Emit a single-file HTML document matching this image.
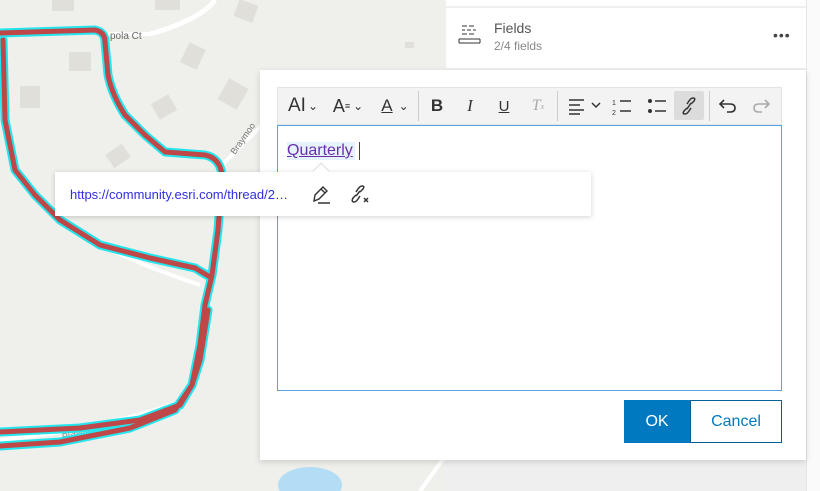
<!DOCTYPE html>
<html><head><meta charset="utf-8"><style>
*{box-sizing:border-box;margin:0;padding:0}
body{width:820px;height:491px;overflow:hidden;position:relative;font-family:"Liberation Sans",sans-serif;background:#f1f1ef}
.abs{position:absolute}
.tb{position:absolute;top:0;height:38px;display:flex;align-items:center;justify-content:center;color:#333}
</style></head><body>
<svg class="abs" style="left:0;top:0" width="446" height="491" viewBox="0 0 446 491">
<rect width="446" height="491" fill="#efefeb"/>
<g fill="#e0dfda">
<rect x="52" y="0" width="22" height="11"/><rect x="155" y="0" width="25" height="10"/><rect x="236" y="2" width="20" height="18" transform="rotate(20 246 11)"/>
<rect x="69" y="52" width="22" height="19"/><rect x="20" y="86" width="20" height="22"/><rect x="184" y="45" width="18" height="22" transform="rotate(25 193 56)"/>
<rect x="154" y="98" width="20" height="18" transform="rotate(-30 164 107)"/><rect x="222" y="82" width="22" height="24" transform="rotate(30 233 94)"/>
<rect x="108" y="148" width="20" height="16" transform="rotate(-35 118 156)"/><rect x="405" y="42" width="9" height="6"/>
</g>
<path d="M150 34 Q200 20 215 0" stroke="#fff" stroke-width="5" fill="none"/>
<path d="M108 34 L150 34" stroke="#fff" stroke-width="4" fill="none"/>
<path d="M222 165 L262 125" stroke="#fff" stroke-width="4" fill="none"/>
<path d="M60 222 Q110 255 200 285" stroke="#fff" stroke-width="4" fill="none"/>
<path d="M0 440 Q100 430 185 400" stroke="#fff" stroke-width="4" fill="none"/>
<path d="M420 491 L446 455" stroke="#fff" stroke-width="4" fill="none"/>
<ellipse cx="310" cy="485" rx="32" ry="18" fill="#b3dcf5"/>
<text x="110" y="39" font-size="10" fill="#666" font-family="Liberation Sans">pola Ct</text>
<text x="235" y="155" font-size="9" fill="#777" transform="rotate(-55 235 155)">Braymoo</text>
<text x="62" y="437" font-size="9" fill="#888" transform="rotate(-4 62 437)">Braymoore Dr</text>
<g fill="none" stroke-linejoin="round" stroke-linecap="round">
<g stroke="#22e5ee" stroke-width="9">
<path d="M0 33 L95 30 Q105 32 105 42 L108 75 Q112 95 125 115 L145 135 L165 152 L205 155 Q220 158 222 175 L218 230 L212 275 L205 305 L200 345 L192 385 L180 405 L140 420 L80 428 L0 432"/>
<path d="M3 40 L5 120 L15 170 L35 195 L60 220 L100 245 L150 258 L195 268 L210 277"/>
<path d="M0 446 L60 442 L130 428 L175 410 L192 385 L200 360 L208 310"/>
</g>
<g stroke="#c04747" stroke-width="5">
<path d="M0 33 L95 30 Q105 32 105 42 L108 75 Q112 95 125 115 L145 135 L165 152 L205 155 Q220 158 222 175 L218 230 L212 275 L205 305 L200 345 L192 385 L180 405 L140 420 L80 428 L0 432"/>
<path d="M3 40 L5 120 L15 170 L35 195 L60 220 L100 245 L150 258 L195 268 L210 277"/>
<path d="M0 446 L60 442 L130 428 L175 410 L192 385 L200 360 L208 310"/>
</g></g>
</svg>
<!-- right panel -->
<div class="abs" style="left:446px;top:0;width:360px;height:491px;background:#efefef"></div>
<div class="abs" style="left:446px;top:0;width:360px;height:6px;background:#fff"></div>
<div class="abs" style="left:806px;top:0;width:14px;height:491px;background:#fafafa;border-left:1px solid #e6e6e6"></div>
<div class="abs" style="left:446px;top:8px;width:360px;height:60px;background:#fff"></div>
<svg class="abs" style="left:458px;top:24px" width="24" height="22"><g stroke="#333" stroke-width="1" fill="none"><path d="M4 2h5M11 2h5M4 6h3M9 6h4M15 6h3M4 10h5M11 10h5M1 15h21M1 19h21M1 15v4M22 15v4"/></g></svg>
<div class="abs" style="left:494px;top:20px;font-size:14px;color:#555">Fields</div>
<div class="abs" style="left:494px;top:39px;font-size:12px;color:#888">2/4 fields</div>
<div class="abs" style="left:773px;top:27px;font-size:14px;color:#444;letter-spacing:1px">•••</div>
<!-- dialog -->
<div class="abs" style="left:260px;top:70px;width:546px;height:390px;background:#fff;box-shadow:0 2px 6px rgba(0,0,0,.15)"></div>
<div class="abs" style="left:277px;top:87px;width:505px;height:38px;background:#f3f3f3;border:1px solid #e4e4e4"></div>
<div class="abs" style="left:277px;top:125px;width:505px;height:266px;border:1px solid #5aa0e6;background:#fff"></div>
<div class="abs" style="left:277px;top:87px;width:505px;height:38px">
<div class="tb" style="left:8px;width:36px;font-size:19px">AI<span style="font-size:12px;margin-left:2px">⌄</span></div>
<div class="tb" style="left:52px;width:38px;font-size:18px">A<span style="font-size:9px;vertical-align:top">≡</span><span style="font-size:12px;margin-left:3px">⌄</span></div>
<div class="tb" style="left:100px;width:36px;font-size:17px"><span style="text-decoration:underline">A</span><span style="font-size:12px;margin-left:6px">⌄</span></div>
<div class="abs" style="left:141px;top:4px;width:1px;height:30px;background:#ccc"></div>
<div class="tb" style="left:148px;width:24px;font-size:17px;font-weight:bold">B</div>
<div class="tb" style="left:181px;width:24px;font-size:17px;font-style:italic;font-family:'Liberation Serif',serif">I</div>
<div class="tb" style="left:215px;width:24px;font-size:15px;text-decoration:underline">U</div>
<div class="tb" style="left:249px;width:24px;font-size:16px;color:#aaa;font-style:italic;font-family:'Liberation Serif',serif">T<span style="font-size:8px">x</span></div>
<div class="abs" style="left:280px;top:4px;width:1px;height:30px;background:#ccc"></div>
<svg class="abs" style="left:290px;top:10px" width="36" height="18"><g stroke="#333" stroke-width="1.5" fill="none"><path d="M2 3h15M2 8h11M2 13h15M2 17h11M25 6l4 4 4-4"/></g></svg>
<svg class="abs" style="left:334px;top:10px" width="22" height="18"><g stroke="#333" stroke-width="1.6" fill="none"><path d="M9 4h11M9 14h11"/></g><text x="1" y="8" font-size="7" fill="#333">1</text><text x="1" y="18" font-size="7" fill="#333">2</text></svg>
<svg class="abs" style="left:369px;top:10px" width="22" height="18"><g fill="#333"><circle cx="4" cy="4" r="2"/><circle cx="4" cy="14" r="2"/></g><g stroke="#333" stroke-width="1.6"><path d="M9 4h11M9 14h11"/></g></svg>
<div class="abs" style="left:397px;top:4px;width:30px;height:29px;background:#dcdcdc;border-radius:2px"></div>
<svg class="abs" style="left:403px;top:9px" width="18" height="20"><g stroke="#333" stroke-width="1.5" fill="none"><path d="M7 12 L4 15 Q2 18 5 18 Q7 18 9 15 L11 12M11 8 L14 5 Q16 2 13 2 Q11 2 9 5 L7 8M7 13 L11 7"/></g></svg>
<div class="abs" style="left:432px;top:4px;width:1px;height:30px;background:#ccc"></div>
<svg class="abs" style="left:441px;top:11px" width="20" height="16"><path d="M6 2 L2 6 L6 10M2 6 H12 Q17 6 17 10 Q17 14 12 14 H9" stroke="#333" stroke-width="1.6" fill="none"/></svg>
<svg class="abs" style="left:474px;top:11px" width="20" height="16"><path d="M14 2 L18 6 L14 10M18 6 H8 Q3 6 3 10 Q3 14 8 14 H11" stroke="#aaa" stroke-width="1.6" fill="none"/></svg>
</div>
<div class="abs" style="left:287px;top:142px;font-size:16px;color:#6a2fa8;text-decoration:underline;background:#e6f3fd;padding:0 2px 0 0">Quarterly</div>
<div class="abs" style="left:359px;top:142px;width:1px;height:18px;background:#5a2a8a"></div>
<!-- popover -->
<div class="abs" style="left:55px;top:172px;width:536px;height:44px;background:#fff;box-shadow:0 1px 5px rgba(0,0,0,.18)"></div>
<div class="abs" style="left:315px;top:165px;width:12px;height:12px;background:#fff;transform:rotate(45deg);border-left:1px solid #ddd;border-top:1px solid #ddd"></div>
<div class="abs" style="left:70px;top:187px;font-size:13px;color:#2f2fe0">https://community.esri.com/thread/2…</div>
<svg class="abs" style="left:310px;top:184px" width="22" height="22"><g stroke="#333" stroke-width="1.4" fill="none"><path d="M4 17 L5 11 L13 3 L17 7 L9 15 Z M11 5 L15 9 M8 19 H20"/></g></svg>
<svg class="abs" style="left:349px;top:184px" width="22" height="22"><g stroke="#333" stroke-width="1.5" fill="none"><path d="M7 11 L4 14 Q2 18 5 18 Q7 18 9 15 L11 12M11 8 L14 5 Q16 2 13 2 Q11 2 9 5 L7 8M7 12 L11 7M15 14 l4 4 M19 14 l-4 4"/></g></svg>
<!-- buttons -->
<div class="abs" style="left:624px;top:400px;width:66px;height:43px;background:#0079c1;color:#fff;font-size:16px;display:flex;align-items:center;justify-content:center">OK</div>
<div class="abs" style="left:690px;top:400px;width:92px;height:43px;border:1px solid #005e95;color:#0079c1;font-size:16px;display:flex;align-items:center;justify-content:center;background:#fff">Cancel</div>
</body></html>
